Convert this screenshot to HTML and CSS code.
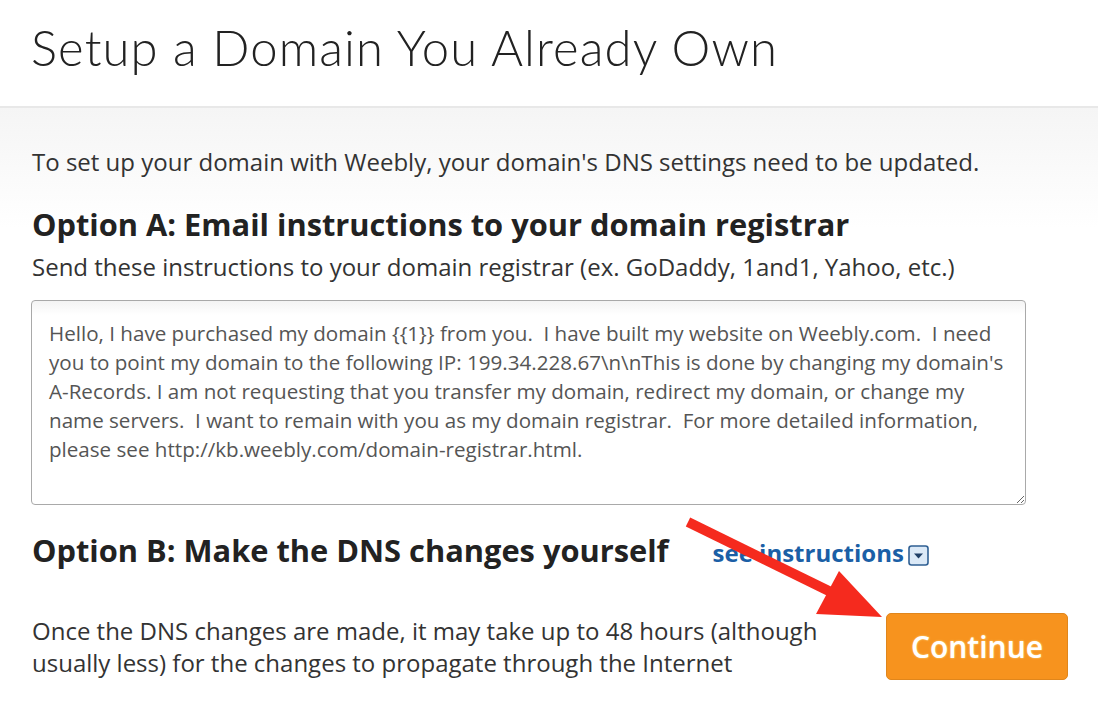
FILE: index.html
```html
<!DOCTYPE html>
<html>
<head>
<meta charset="utf-8">
<link rel="stylesheet" href="styles.css">
</head>
<body>
<header class="top">
  <h1 class="title">Setup a Domain You Already Own</h1>
</header>
<main class="content">
  <p class="intro">To set up your domain with Weebly, your domain's DNS settings need to be updated.</p>
  <h2 class="opt">Option A: Email instructions to your domain registrar</h2>
  <p class="sub">Send these instructions to your domain registrar (ex. GoDaddy, 1and1, Yahoo, etc.)</p>
  <textarea class="msg" readonly wrap="off">Hello, I have purchased my domain {{1}} from you.  I have built my website on Weebly.com.  I need
you to point my domain to the following IP: 199.34.228.67\n\nThis is done by changing my domain's
A-Records. I am not requesting that you transfer my domain, redirect my domain, or change my
name servers.  I want to remain with you as my domain registrar.  For more detailed information,
please see http://kb.weebly.com/domain-registrar.html.</textarea>
  <div class="optb">
    <h2 class="opt">Option B: Make the DNS changes yourself</h2>
    <a class="see" href="#">see instructions <span class="drop"><svg width="21" height="21" viewBox="0 0 21 21"><rect x="1" y="1" width="19" height="19" rx="2.5" fill="#dbe9f7" stroke="#2f5f93" stroke-width="1.6"/><path d="M6 8.5 L15 8.5 L10.5 13.5 Z" fill="#1f3f66"/></svg></span></a>
  </div>
  <div class="foot">
    <p class="note">Once the DNS changes are made, it may take up to 48 hours (although usually less) for the changes to propagate through the Internet</p>
    <button class="go">Continue</button>
  </div>
</main>
<svg class="arrow" width="1098" height="704" viewBox="0 0 1098 704">
  <line x1="688" y1="522" x2="835" y2="594" stroke="#f52a1e" stroke-width="10"/>
  <polygon points="816,614 839,571 882,617" fill="#f52a1e"/>
</svg>
</body>
</html>
```
FILE: styles.css
```css
html, body {
  margin: 0;
  padding: 0;
}
body {
  width: 1098px;
  height: 704px;
  overflow: hidden;
  position: relative;
  background: #fff;
  font-family: "Open Sans", "Liberation Sans", sans-serif;
  color: #333;
}
.top {
  height: 106px;
  border-bottom: 2px solid #e8e8e8;
  background: #fff;
  display: flex;
  align-items: center;
  padding-left: 31px;
}
.title {
  margin: 0;
  margin-top: -12px;
  font-family: "Lato", "Open Sans", sans-serif;
  font-weight: 300;
  font-size: 49px;
  letter-spacing: 1.1px;
  color: #222;
}
.content {
  padding: 0 72px 0 32px;
  background: linear-gradient(#f5f5f5, #ffffff 120px);
  height: 596px;
}
.intro {
  margin: 0;
  padding-top: 38px;
  font-size: 24px;
  line-height: 32px;
  color: #333;
}
.opt {
  margin: 0;
  font-size: 30.8px;
  font-weight: 700;
  color: #222;
  line-height: 40px;
}
.content > .opt {
  margin-top: 26px;
}
.sub {
  margin: 0;
  margin-top: 8px;
  font-size: 24px;
  line-height: 30px;
  color: #333;
}
.msg {
  display: block;
  box-sizing: border-box;
  width: 995px;
  height: 205px;
  margin-top: 18px;
  margin-left: -1px;
  padding: 18px 17px;
  border: 1px solid #a9a9a9;
  border-radius: 4px;
  background: linear-gradient(#f4f4f4, #fff 14px);
  font-family: "Open Sans", "Liberation Sans", sans-serif;
  font-size: 20.6px;
  line-height: 29px;
  color: #555;
  overflow: hidden;
  resize: both;
  outline: none;
}
.optb {
  display: flex;
  align-items: baseline;
  margin-top: 25px;
}
.see {
  margin-left: 44px;
  font-size: 24px;
  font-weight: 700;
  color: #1b5fa6;
  text-decoration: none;
  display: inline-flex;
  align-items: center;
}
.drop {
  display: inline-flex;
  margin-left: 4px;
  margin-top: 6px;
}
.foot {
  display: flex;
  align-items: center;
  justify-content: space-between;
  margin-top: 43px;
  margin-right: -42px;
}
.note {
  margin: 0;
  width: 830px;
  font-size: 24px;
  line-height: 32px;
  color: #333;
}
.go {
  width: 182px;
  height: 67px;
  border: 1px solid #e0861c;
  border-radius: 5px;
  background: #f7931e;
  color: #fff;
  font-family: "Open Sans", "Liberation Sans", sans-serif;
  font-size: 30px;
  font-weight: 600;
  text-shadow: 0 0 2px #ffe08a;
  cursor: pointer;
}
.arrow {
  position: absolute;
  left: 0;
  top: 0;
  pointer-events: none;
}
```
